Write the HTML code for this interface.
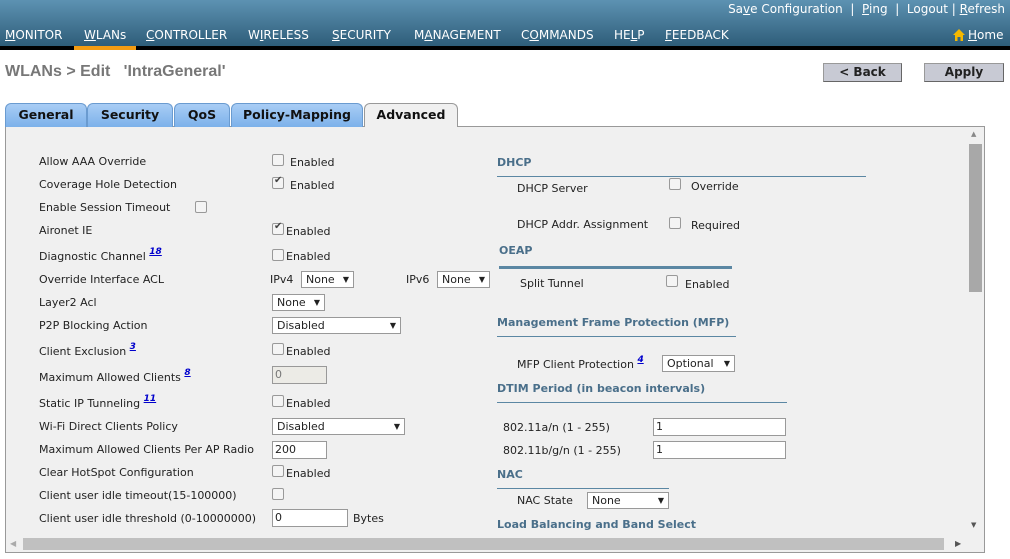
<!DOCTYPE html>
<html><head><meta charset="utf-8"><style>
*{margin:0;padding:0;box-sizing:border-box}
body{width:1010px;height:559px;background:#fff;font-family:"DejaVu Sans","Liberation Sans",sans-serif;font-size:11px;color:#222;position:relative;overflow:hidden}
.a{position:absolute;white-space:nowrap;line-height:14px}
#hdr{position:absolute;left:0;top:0;width:1010px;height:47px;background:linear-gradient(#5d92b2,#2d5c78)}
#blk{position:absolute;left:0;top:46px;width:1010px;height:4px;background:#000}
.nav{color:#fff;font-size:12px;top:28px}
.top{color:#fff;font-size:12px;top:2px}
.btn{position:absolute;top:63px;height:19px;background:#c8cad4;border:1px solid #999;border-right-color:#666;border-bottom-color:#666;font-weight:bold;font-size:12px;text-align:center;line-height:17px;color:#222}
.tab{position:absolute;top:103px;height:24px;background:linear-gradient(#a9cdf5,#7cb1ea);border:1px solid #6a9bd0;border-bottom:none;border-radius:6px 6px 0 0;font-weight:bold;font-size:12.5px;text-align:center;line-height:22px;color:#111}
#panel{position:absolute;left:5px;top:126px;width:980px;height:427px;background:#f0f0f0;border:1px solid #999}
.cb{position:absolute;width:12px;height:12px;border:1px solid #999;border-radius:2px;background:#f4f4f4}
.cb.c::after{content:"✔";position:absolute;left:1px;top:-3px;font-size:10px;color:#444}
.sel{position:absolute;height:17px;background:#fff;border:1px solid #999;line-height:15px;padding-left:4px;font-size:11px}
.sel::after{content:"▼";position:absolute;right:4px;top:0;font-size:8px}
.inp{position:absolute;height:18px;background:#fff;border:1px solid #999;line-height:16px;padding-left:2px}
.h{color:#4a6f8a;font-weight:bold;font-size:11px}
.ln{position:absolute;height:1px;background:#5b87a3}
sup{color:#00c;font-weight:bold;font-style:italic;text-decoration:underline;font-size:9px;vertical-align:top;line-height:0;position:relative;top:2px}
</style></head><body>
<div id="hdr"></div><div id="blk"></div>
<div style="position:absolute;left:74px;top:46px;width:62px;height:4px;background:#f39c12"></div>
<div class="a top" style="right:5px">Sa<u>v</u>e Configuration &nbsp;| &nbsp;<u>P</u>ing &nbsp;| &nbsp;Logout | <u>R</u>efresh</div>
<div class="a nav" style="left:5px"><u>M</u>ONITOR</div>
<div class="a nav" style="left:84px"><u>W</u>LANs</div>
<div class="a nav" style="left:146px"><u>C</u>ONTROLLER</div>
<div class="a nav" style="left:248px">W<u>I</u>RELESS</div>
<div class="a nav" style="left:332px"><u>S</u>ECURITY</div>
<div class="a nav" style="left:414px">M<u>A</u>NAGEMENT</div>
<div class="a nav" style="left:521px">C<u>O</u>MMANDS</div>
<div class="a nav" style="left:614px">HE<u>L</u>P</div>
<div class="a nav" style="left:665px"><u>F</u>EEDBACK</div>
<svg style="position:absolute;left:953px;top:29px" width="12" height="12" viewBox="0 0 12 12"><path d="M6 0 L12 6 L10 6 L10 12 L7.5 12 L7.5 8 L4.5 8 L4.5 12 L2 12 L2 6 L0 6 Z" fill="#f5b800"/></svg>
<div class="a nav" style="left:968px"><u>H</u>ome</div>
<div class="a" style="left:5px;top:63px;font-family:'Liberation Sans',sans-serif;font-size:16px;font-weight:bold;color:#777;line-height:18px">WLANs &gt; Edit &nbsp; 'IntraGeneral'</div>
<div class="btn" style="left:823px;width:79px">&lt; Back</div>
<div class="btn" style="left:924px;width:80px">Apply</div>
<div id="panel"></div>
<div class="tab" style="left:5px;width:82px">General</div>
<div class="tab" style="left:87px;width:86px">Security</div>
<div class="tab" style="left:174px;width:56px">QoS</div>
<div class="tab" style="left:231px;width:132px">Policy-Mapping</div>
<div class="tab" style="left:364px;width:94px;background:#f0f0f0;border-color:#999;height:24px">Advanced</div>
<!-- left column -->
<div class="a" style="left:39px;top:155px">Allow AAA Override</div><div class="cb" style="left:272px;top:154px"></div><div class="a" style="left:290px;top:156px">Enabled</div>
<div class="a" style="left:39px;top:178px">Coverage Hole Detection</div><div class="cb c" style="left:272px;top:177px"></div><div class="a" style="left:290px;top:179px">Enabled</div>
<div class="a" style="left:39px;top:201px">Enable Session Timeout</div><div class="cb" style="left:195px;top:201px"></div>
<div class="a" style="left:39px;top:224px">Aironet IE</div><div class="cb c" style="left:272px;top:223px"></div><div class="a" style="left:286px;top:225px">Enabled</div>
<div class="a" style="left:39px;top:250px">Diagnostic Channel <sup>18</sup></div><div class="cb" style="left:272px;top:249px"></div><div class="a" style="left:286px;top:250px">Enabled</div>
<div class="a" style="left:39px;top:273px">Override Interface ACL</div><div class="a" style="left:270px;top:273px">IPv4</div><div class="sel" style="left:301px;top:271px;width:53px">None</div><div class="a" style="left:406px;top:273px">IPv6</div><div class="sel" style="left:437px;top:271px;width:53px">None</div>
<div class="a" style="left:39px;top:296px">Layer2 Acl</div><div class="sel" style="left:272px;top:294px;width:53px">None</div>
<div class="a" style="left:39px;top:319px">P2P Blocking Action</div><div class="sel" style="left:272px;top:317px;width:129px">Disabled</div>
<div class="a" style="left:39px;top:345px">Client Exclusion <sup>3</sup></div><div class="cb" style="left:272px;top:343px"></div><div class="a" style="left:286px;top:345px">Enabled</div>
<div class="a" style="left:39px;top:371px">Maximum Allowed Clients <sup>8</sup></div><div class="inp" style="left:272px;top:366px;width:55px;background:#ecebe6;color:#777">0</div>
<div class="a" style="left:39px;top:397px">Static IP Tunneling <sup>11</sup></div><div class="cb" style="left:272px;top:395px"></div><div class="a" style="left:286px;top:397px">Enabled</div>
<div class="a" style="left:39px;top:420px">Wi-Fi Direct Clients Policy</div><div class="sel" style="left:272px;top:418px;width:133px">Disabled</div>
<div class="a" style="left:39px;top:443px">Maximum Allowed Clients Per AP Radio</div><div class="inp" style="left:272px;top:441px;width:55px">200</div>
<div class="a" style="left:39px;top:466px">Clear HotSpot Configuration</div><div class="cb" style="left:272px;top:465px"></div><div class="a" style="left:286px;top:467px">Enabled</div>
<div class="a" style="left:39px;top:489px">Client user idle timeout(15-100000)</div><div class="cb" style="left:272px;top:488px"></div>
<div class="a" style="left:39px;top:512px">Client user idle threshold (0-10000000)</div><div class="inp" style="left:272px;top:509px;width:76px">0</div><div class="a" style="left:353px;top:512px">Bytes</div>
<!-- right column -->
<div class="a h" style="left:497px;top:156px">DHCP</div><div class="ln" style="left:497px;top:176px;width:369px"></div>
<div class="a" style="left:517px;top:182px">DHCP Server</div><div class="cb" style="left:669px;top:178px"></div><div class="a" style="left:691px;top:180px">Override</div>
<div class="a" style="left:517px;top:218px">DHCP Addr. Assignment</div><div class="cb" style="left:669px;top:217px"></div><div class="a" style="left:691px;top:219px">Required</div>
<div class="a h" style="left:499px;top:244px">OEAP</div><div class="ln" style="left:499px;top:266px;width:233px;height:3px"></div>
<div class="a" style="left:520px;top:277px">Split Tunnel</div><div class="cb" style="left:666px;top:275px"></div><div class="a" style="left:685px;top:278px">Enabled</div>
<div class="a h" style="left:497px;top:316px">Management Frame Protection (MFP)</div><div class="ln" style="left:497px;top:336px;width:239px"></div>
<div class="a" style="left:517px;top:358px">MFP Client Protection <sup>4</sup></div><div class="sel" style="left:662px;top:355px;width:73px">Optional</div>
<div class="a h" style="left:497px;top:382px">DTIM Period (in beacon intervals)</div><div class="ln" style="left:497px;top:402px;width:290px"></div>
<div class="a" style="left:503px;top:421px">802.11a/n (1 - 255)</div><div class="inp" style="left:653px;top:418px;width:133px">1</div>
<div class="a" style="left:503px;top:444px">802.11b/g/n (1 - 255)</div><div class="inp" style="left:653px;top:441px;width:133px">1</div>
<div class="a h" style="left:497px;top:468px">NAC</div><div class="ln" style="left:497px;top:488px;width:172px"></div>
<div class="a" style="left:517px;top:494px">NAC State</div><div class="sel" style="left:587px;top:492px;width:82px">None</div>
<div class="a h" style="left:497px;top:518px">Load Balancing and Band Select</div>
<!-- scrollbars -->
<div style="position:absolute;left:968px;top:127px;width:16px;height:410px;background:#f0f0f0"></div>
<div class="a" style="left:971px;top:127px;font-size:7px;color:#888">&#9650;</div>
<div style="position:absolute;left:969px;top:144px;width:13px;height:148px;background:#a8a8a8"></div>
<div class="a" style="left:971px;top:518px;font-size:7px;color:#555">&#9660;</div>
<div style="position:absolute;left:6px;top:537px;width:962px;height:15px;background:#f0f0f0"></div>
<div style="position:absolute;left:23px;top:538px;width:921px;height:12px;background:#c0c0c0"></div>
<div class="a" style="left:10px;top:537px;font-size:8px;color:#aaa">&#9664;</div>
<div class="a" style="left:955px;top:537px;font-size:8px;color:#555">&#9654;</div>
</body></html>
